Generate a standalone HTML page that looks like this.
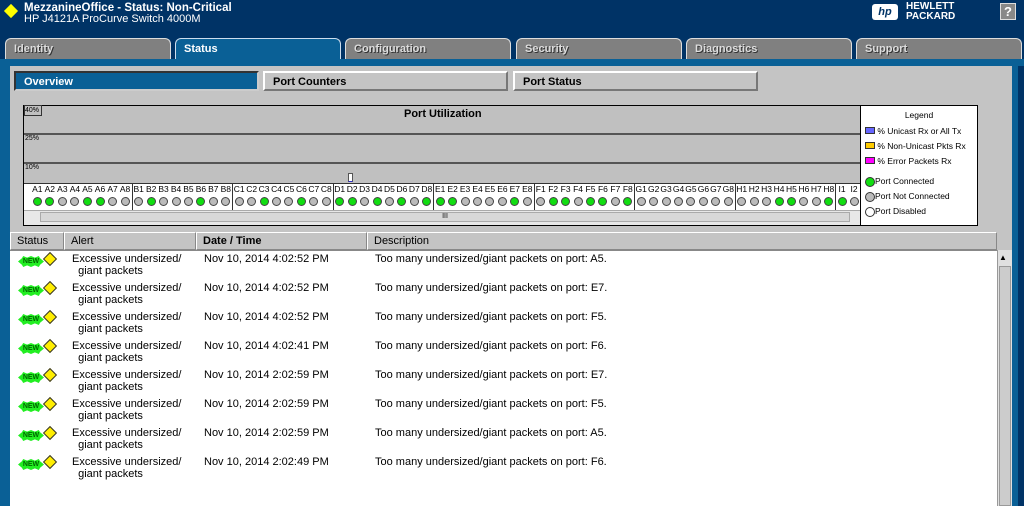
<!DOCTYPE html>
<html><head><style>
*{margin:0;padding:0;box-sizing:border-box}
body{width:1024px;height:506px;overflow:hidden;background:#003366;font-family:"Liberation Sans",sans-serif;position:relative}
.abs{position:absolute}
.tab{position:absolute;top:38px;height:21px;width:166px;background:#808080;border:1px solid #ddd;border-bottom:none;border-radius:6px 6px 0 0;color:#ddd;font-weight:bold;font-size:11px;padding:4px 0 0 8px;text-shadow:1px 1px 0 #333}
.tab.on{background:#0a6096;color:#fff;text-shadow:none;border-color:#cde}
.sub{position:absolute;top:71px;height:20px;width:245px;background:#c4c4c4;border:2px solid;border-color:#fff #777 #777 #fff;font-size:11px;font-weight:bold;padding:3px 0 0 8px}
.grp{position:absolute;top:184px;width:100.5px;height:26px;display:flex;border-left:1px solid #333}
.p{width:12.56px;text-align:center;font-size:8.5px;line-height:11px;color:#000}
.p i{display:block;width:9px;height:9px;border-radius:50%;border:1px solid #444;background:#bbb;margin:2px auto 0}
.p i.g{background:#11dd11}
.row{position:absolute;left:10px;width:987px;height:29px;font-size:11px}
.row span{position:absolute;top:0}
.new{position:absolute;left:8px;top:3px;width:26px;height:11px;background:#22ee22;color:#060;font-size:7px;font-weight:bold;text-align:center;line-height:11px;clip-path:polygon(0 50%,15% 20%,20% 0,35% 15%,50% 0,65% 15%,80% 0,85% 20%,100% 50%,85% 80%,80% 100%,65% 85%,50% 100%,35% 85%,20% 100%,15% 80%)}
.dia{position:absolute;left:35px;top:1px;width:10px;height:10px;background:#ffee00;border:1px solid #333;transform:rotate(45deg)}
.hd{position:absolute;top:232px;height:18px;background:#c4c4c4;border:1px solid;border-color:#fff #888 #888 #fff;font-size:11px;padding:2px 0 0 6px}
</style></head><body>
<div class="abs" style="left:6px;top:6px;width:10px;height:10px;background:#ff0;transform:rotate(45deg)"></div>
<div class="abs" style="left:24px;top:2px;color:#fff;font-size:11.5px;font-weight:bold">MezzanineOffice - Status: Non-Critical</div>
<div class="abs" style="left:24px;top:13px;color:#fff;font-size:11px">HP J4121A ProCurve Switch 4000M</div>
<div class="abs" style="left:872px;top:4px;width:26px;height:16px;background:#fff;border-radius:3px;color:#036;font-style:italic;font-weight:bold;font-size:11px;text-align:center;line-height:16px">hp</div>
<div class="abs" style="left:906px;top:2px;color:#fff;font-size:10px;font-weight:bold;line-height:10px">HEWLETT<br>PACKARD</div>
<div class="abs" style="left:1000px;top:3px;width:16px;height:17px;background:#888;border:1px solid #ddd;color:#fff;font-weight:bold;font-size:13px;text-align:center;line-height:15px">?</div>
<div class="tab" style="left:5px">Identity</div>
<div class="tab on" style="left:175px">Status</div>
<div class="tab" style="left:345px">Configuration</div>
<div class="tab" style="left:516px">Security</div>
<div class="tab" style="left:686px">Diagnostics</div>
<div class="tab" style="left:856px">Support</div>
<div class="abs" style="left:0;top:59px;width:1024px;height:7px;background:#0a6096"></div>
<div class="abs" style="left:0;top:66px;width:10px;height:440px;background:#0a6096"></div>
<div class="abs" style="left:1012px;top:66px;width:6px;height:440px;background:#0a6096"></div>
<div class="abs" style="left:10px;top:66px;width:1002px;height:440px;background:#c4c4c4"></div>
<div class="sub" style="left:14px;background:#0a6096;color:#fff;border-color:#333 #ccc #ccc #333">Overview</div>
<div class="sub" style="left:263px">Port Counters</div>
<div class="sub" style="left:513px">Port Status</div>
<div class="abs" style="left:23px;top:105px;width:955px;height:121px;border:1px solid #000;background:#c0c0c0"></div>
<div class="abs" style="left:24px;top:105px;width:18px;height:11px;border:1px solid #333;font-size:7px;line-height:9px">40%</div>
<div class="abs" style="left:404px;top:108px;font-size:11px;font-weight:bold">Port Utilization</div>
<div class="abs" style="left:24px;top:133px;width:836px;height:2px;background:#555"></div>
<div class="abs" style="left:25px;top:135px;font-size:7px">25%</div>
<div class="abs" style="left:24px;top:162px;width:836px;height:2px;background:#555"></div>
<div class="abs" style="left:25px;top:164px;font-size:7px">10%</div>
<div class="abs" style="left:348px;top:173px;width:5px;height:9px;border:1px solid #555;background:#fff;border-bottom:1px solid #33c"></div>
<div class="abs" style="left:24px;top:183px;width:836px;height:27px;background:#fff;border-top:1px solid #333"></div>
<div class="abs" style="left:24px;top:210px;width:836px;height:15px;background:#e8e8e8;border-top:1px solid #aaa"></div>
<div class="abs" style="left:40px;top:212px;width:810px;height:10px;background:#d8d8d8;border:1px solid #aaa;font-size:7px;text-align:center">III</div>
<div class="abs" style="left:860px;top:106px;width:117px;height:119px;background:#fff;border-left:1px solid #000;font-size:8.5px">
<div style="text-align:center;margin-top:4px">Legend</div>
<div style="position:absolute;left:4px;top:20px"><b style="display:inline-block;width:10px;height:7px;background:#66f;border:1px solid #333"></b> % Unicast Rx or All Tx</div>
<div style="position:absolute;left:4px;top:35px"><b style="display:inline-block;width:10px;height:7px;background:#fc0;border:1px solid #333"></b> % Non-Unicast Pkts Rx</div>
<div style="position:absolute;left:4px;top:50px"><b style="display:inline-block;width:10px;height:7px;background:#f0f;border:1px solid #333"></b> % Error Packets Rx</div>
<div style="position:absolute;left:4px;top:70px"><b style="display:inline-block;width:10px;height:10px;border-radius:50%;background:#1d1;border:1px solid #333;vertical-align:middle"></b>Port Connected</div>
<div style="position:absolute;left:4px;top:85px"><b style="display:inline-block;width:10px;height:10px;border-radius:50%;background:#bbb;border:1px solid #333;vertical-align:middle"></b>Port Not Connected</div>
<div style="position:absolute;left:4px;top:100px"><b style="display:inline-block;width:10px;height:10px;border-radius:50%;background:#fff;border:1px solid #333;vertical-align:middle"></b>Port Disabled</div>
</div>
<div class="grp" style="left:31px;border-left:none"><div class="p">A1<i class="g"></i></div><div class="p">A2<i class="g"></i></div><div class="p">A3<i></i></div><div class="p">A4<i></i></div><div class="p">A5<i class="g"></i></div><div class="p">A6<i class="g"></i></div><div class="p">A7<i></i></div><div class="p">A8<i></i></div></div>
<div class="grp" style="left:131.5px"><div class="p">B1<i></i></div><div class="p">B2<i class="g"></i></div><div class="p">B3<i></i></div><div class="p">B4<i></i></div><div class="p">B5<i></i></div><div class="p">B6<i class="g"></i></div><div class="p">B7<i></i></div><div class="p">B8<i></i></div></div>
<div class="grp" style="left:232px"><div class="p">C1<i></i></div><div class="p">C2<i></i></div><div class="p">C3<i class="g"></i></div><div class="p">C4<i></i></div><div class="p">C5<i></i></div><div class="p">C6<i class="g"></i></div><div class="p">C7<i></i></div><div class="p">C8<i></i></div></div>
<div class="grp" style="left:332.5px"><div class="p">D1<i class="g"></i></div><div class="p">D2<i class="g"></i></div><div class="p">D3<i></i></div><div class="p">D4<i class="g"></i></div><div class="p">D5<i></i></div><div class="p">D6<i class="g"></i></div><div class="p">D7<i></i></div><div class="p">D8<i class="g"></i></div></div>
<div class="grp" style="left:433px"><div class="p">E1<i class="g"></i></div><div class="p">E2<i class="g"></i></div><div class="p">E3<i></i></div><div class="p">E4<i></i></div><div class="p">E5<i></i></div><div class="p">E6<i></i></div><div class="p">E7<i class="g"></i></div><div class="p">E8<i></i></div></div>
<div class="grp" style="left:533.5px"><div class="p">F1<i></i></div><div class="p">F2<i class="g"></i></div><div class="p">F3<i class="g"></i></div><div class="p">F4<i></i></div><div class="p">F5<i class="g"></i></div><div class="p">F6<i class="g"></i></div><div class="p">F7<i></i></div><div class="p">F8<i class="g"></i></div></div>
<div class="grp" style="left:634px"><div class="p">G1<i></i></div><div class="p">G2<i></i></div><div class="p">G3<i></i></div><div class="p">G4<i></i></div><div class="p">G5<i></i></div><div class="p">G6<i></i></div><div class="p">G7<i></i></div><div class="p">G8<i></i></div></div>
<div class="grp" style="left:734.5px"><div class="p">H1<i></i></div><div class="p">H2<i></i></div><div class="p">H3<i></i></div><div class="p">H4<i class="g"></i></div><div class="p">H5<i class="g"></i></div><div class="p">H6<i></i></div><div class="p">H7<i></i></div><div class="p">H8<i class="g"></i></div></div>
<div class="grp" style="left:835px;width:25px"><div class="p">I1<i class="g"></i></div><div class="p">I2<i></i></div></div>

<div class="abs" style="left:10px;top:250px;width:987px;height:256px;background:#fff;border-top:1px solid #888"></div>
<div class="hd" style="left:10px;width:54px">Status</div>
<div class="hd" style="left:64px;width:132px">Alert</div>
<div class="hd" style="left:196px;width:171px;font-weight:bold">Date / Time</div>
<div class="hd" style="left:367px;width:630px">Description</div>
<div class="abs" style="left:997px;top:250px;width:15px;height:256px;background:#e0e0e0;border-left:1px solid #999"></div>
<div class="abs" style="left:999px;top:253px;font-size:8px">▲</div>
<div class="abs" style="left:999px;top:266px;width:12px;height:240px;background:#ccc;border:1px solid #999"></div>

<div class="row" style="top:253px"><div class="new">NEW</div><div class="dia"></div><span style="left:62px">Excessive undersized/<br>&nbsp;&nbsp;giant packets</span><span style="left:194px">Nov 10, 2014 4:02:52 PM</span><span style="left:365px">Too many undersized/giant packets on port: A5.</span></div>
<div class="row" style="top:282px"><div class="new">NEW</div><div class="dia"></div><span style="left:62px">Excessive undersized/<br>&nbsp;&nbsp;giant packets</span><span style="left:194px">Nov 10, 2014 4:02:52 PM</span><span style="left:365px">Too many undersized/giant packets on port: E7.</span></div>
<div class="row" style="top:311px"><div class="new">NEW</div><div class="dia"></div><span style="left:62px">Excessive undersized/<br>&nbsp;&nbsp;giant packets</span><span style="left:194px">Nov 10, 2014 4:02:52 PM</span><span style="left:365px">Too many undersized/giant packets on port: F5.</span></div>
<div class="row" style="top:340px"><div class="new">NEW</div><div class="dia"></div><span style="left:62px">Excessive undersized/<br>&nbsp;&nbsp;giant packets</span><span style="left:194px">Nov 10, 2014 4:02:41 PM</span><span style="left:365px">Too many undersized/giant packets on port: F6.</span></div>
<div class="row" style="top:369px"><div class="new">NEW</div><div class="dia"></div><span style="left:62px">Excessive undersized/<br>&nbsp;&nbsp;giant packets</span><span style="left:194px">Nov 10, 2014 2:02:59 PM</span><span style="left:365px">Too many undersized/giant packets on port: E7.</span></div>
<div class="row" style="top:398px"><div class="new">NEW</div><div class="dia"></div><span style="left:62px">Excessive undersized/<br>&nbsp;&nbsp;giant packets</span><span style="left:194px">Nov 10, 2014 2:02:59 PM</span><span style="left:365px">Too many undersized/giant packets on port: F5.</span></div>
<div class="row" style="top:427px"><div class="new">NEW</div><div class="dia"></div><span style="left:62px">Excessive undersized/<br>&nbsp;&nbsp;giant packets</span><span style="left:194px">Nov 10, 2014 2:02:59 PM</span><span style="left:365px">Too many undersized/giant packets on port: A5.</span></div>
<div class="row" style="top:456px"><div class="new">NEW</div><div class="dia"></div><span style="left:62px">Excessive undersized/<br>&nbsp;&nbsp;giant packets</span><span style="left:194px">Nov 10, 2014 2:02:49 PM</span><span style="left:365px">Too many undersized/giant packets on port: F6.</span></div>
</body></html>
